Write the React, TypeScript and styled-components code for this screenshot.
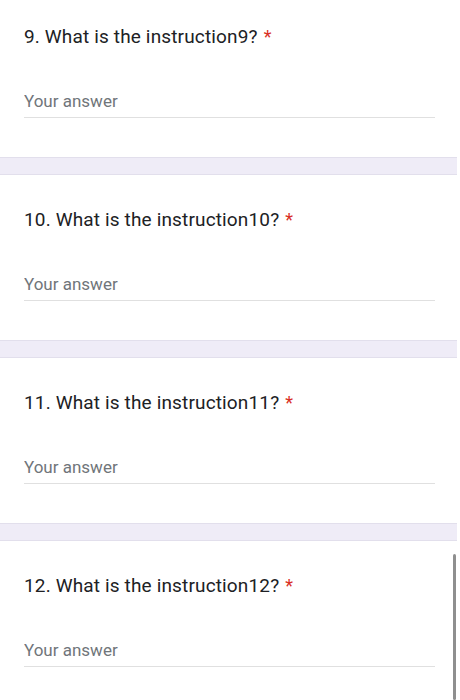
import React from 'react';
import styled, { createGlobalStyle } from 'styled-components';

const GlobalStyle = createGlobalStyle`
  html, body {
    margin: 0;
    padding: 0;
    background: #ffffff;
    overflow: hidden;
  }
  body {
    font-family: Roboto, "Noto Sans", Arial, sans-serif;
  }
`;

const Screen = styled.div`
  position: relative;
  width: 460px;
  height: 700px;
  overflow: hidden;
  background: #ffffff;
`;

const List = styled.div`
  display: flex;
  flex-direction: column;
  gap: 16px;
  width: 457px;
  margin-top: -9px;
  background: #efecf7;
`;

const Card = styled.section`
  display: flex;
  flex-direction: column;
  height: 167px;
  padding: 33px 22px 0 24px;
  box-sizing: border-box;
  background: #ffffff;
  border-top: 1px solid #e2dfec;
  border-bottom: 1px solid #e2dfec;
`;

const Title = styled.div`
  font-size: 19px;
  line-height: 24px;
  color: #202124;
  letter-spacing: 0.15px;
`;

const Star = styled.span`
  color: #d93025;
  margin-left: 6px;
  font-size: 18px;
`;

const Answer = styled.input`
  margin-top: 41px;
  width: 100%;
  border: none;
  border-bottom: 1px solid #e0e0e0;
  padding: 0 0 5px 0;
  font-family: Roboto, "Noto Sans", Arial, sans-serif;
  font-size: 17px;
  line-height: 22px;
  color: #202124;
  background: transparent;
  outline: none;
  &::placeholder {
    color: #70757a;
  }
`;

const Scrollbar = styled.div`
  position: absolute;
  right: 4px;
  top: 554px;
  width: 3px;
  height: 146px;
  background: #8f8f8f;
  border-radius: 2px;
`;

const questions = [9, 10, 11, 12];

export default function App() {
  return (
    <Screen>
      <GlobalStyle />
      <List>
        {questions.map((n) => (
          <Card key={n}>
            <Title>
              {n}. What is the instruction{n}?<Star>*</Star>
            </Title>
            <Answer placeholder="Your answer" />
          </Card>
        ))}
      </List>
      <Scrollbar />
    </Screen>
  );
}
